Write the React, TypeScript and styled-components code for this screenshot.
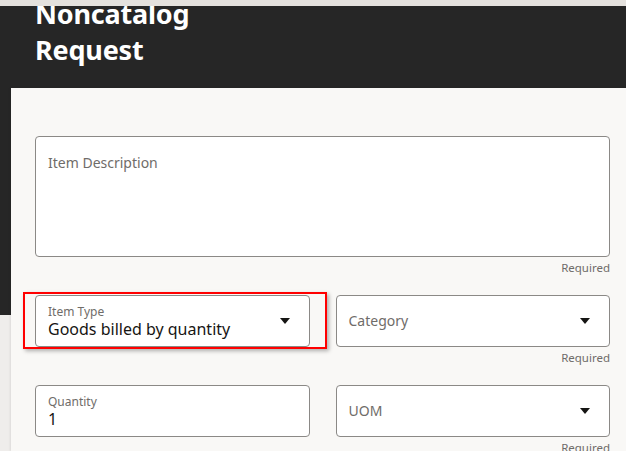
import React from 'react'
import styled, { createGlobalStyle } from 'styled-components'

const GlobalStyle = createGlobalStyle`
  html, body {
    margin: 0;
    padding: 0;
    background: #efedeb;
    font-family: 'Noto Sans', 'Open Sans', Arial, sans-serif;
  }
  * {
    box-sizing: border-box;
  }
`

const Page = styled.div`
  display: flex;
  flex-direction: column;
  height: 451px;
  overflow: hidden;
`

const TopStrip = styled.div`
  background: #e4e1dd;
  flex-shrink: 0;
  height: 6px;
`

const Header = styled.header`
  background: #262626;
  flex-shrink: 0;
  height: 82px;
  overflow: hidden;
  padding-left: 35px;
`

const Title = styled.h1`
  color: #fff;
  font-size: 27px;
  font-weight: 700;
  letter-spacing: -0.2px;
  line-height: 36px;
  margin: -10px 0 0;
`

const Body = styled.div`
  display: flex;
  flex: 1;
  min-height: 0;
`

const Rail = styled.div`
  background: linear-gradient(#262626 0 227px, #efedeb 227px);
  flex-shrink: 0;
  width: 11px;
`

const Panel = styled.main`
  background: #f9f8f6;
  box-shadow: -1px 0 2px rgba(0, 0, 0, 0.08);
  flex: 1;
  padding: 48px 16px 0 24px;
`

const Form = styled.div`
  align-items: start;
  column-gap: 26px;
  display: grid;
  grid-template-columns: 1fr 1fr;
  row-gap: 19px;
`

const FieldBlock = styled.div<{ $wide?: boolean }>`
  grid-column: ${({ $wide }) => ($wide ? '1 / -1' : 'auto')};
  position: relative;
`

const Box = styled.div<{ $tall?: boolean }>`
  align-items: ${({ $tall }) => ($tall ? 'flex-start' : 'center')};
  background: #fff;
  border: 1px solid #8b8986;
  border-radius: 4px;
  display: flex;
  height: ${({ $tall }) => ($tall ? '121px' : '52px')};
  padding: ${({ $tall }) => ($tall ? '16px 12px 0' : '0 19px 0 12px')};
`

const Stack = styled.div`
  align-self: flex-start;
  display: flex;
  flex: 1;
  flex-direction: column;
  padding-top: 9px;
`

const Label = styled.span`
  color: #6f6c69;
  font-size: 12px;
  line-height: 14px;
`

const Value = styled.span`
  color: #161513;
  font-size: 16px;
  line-height: 20px;
`

const Placeholder = styled.span`
  color: #6f6c69;
  flex: 1;
  font-size: 14px;
  line-height: 20px;
`

const Caret = styled.span`
  border-left: 5.5px solid transparent;
  border-right: 5.5px solid transparent;
  border-top: 6px solid #161513;
  height: 0;
  width: 0;
`

const Help = styled.div`
  color: #6f6c69;
  font-size: 11.5px;
  line-height: 16px;
  margin-top: 3px;
  text-align: right;
`

const Highlight = styled.div`
  border: 2px solid #ff0000;
  bottom: -2px;
  box-shadow: 2px 2px 4px rgba(0, 0, 0, 0.3);
  left: -12px;
  pointer-events: none;
  position: absolute;
  right: -17px;
  top: -3px;
`

const App: React.FC = () => {
  return (
    <Page>
      <GlobalStyle />
      <TopStrip />
      <Header>
        <Title>
          Noncatalog
          <br />
          Request
        </Title>
      </Header>
      <Body>
        <Rail />
        <Panel>
          <Form>
            <FieldBlock $wide>
              <Box $tall>
                <Placeholder>Item Description</Placeholder>
              </Box>
              <Help>Required</Help>
            </FieldBlock>

            <FieldBlock>
              <Box>
                <Stack>
                  <Label>Item Type</Label>
                  <Value>Goods billed by quantity</Value>
                </Stack>
                <Caret />
              </Box>
              <Highlight />
            </FieldBlock>

            <FieldBlock>
              <Box>
                <Placeholder>Category</Placeholder>
                <Caret />
              </Box>
              <Help>Required</Help>
            </FieldBlock>

            <FieldBlock>
              <Box>
                <Stack>
                  <Label>Quantity</Label>
                  <Value>1</Value>
                </Stack>
              </Box>
            </FieldBlock>

            <FieldBlock>
              <Box>
                <Placeholder>UOM</Placeholder>
                <Caret />
              </Box>
              <Help>Required</Help>
            </FieldBlock>
          </Form>
        </Panel>
      </Body>
    </Page>
  )
}

export default App
